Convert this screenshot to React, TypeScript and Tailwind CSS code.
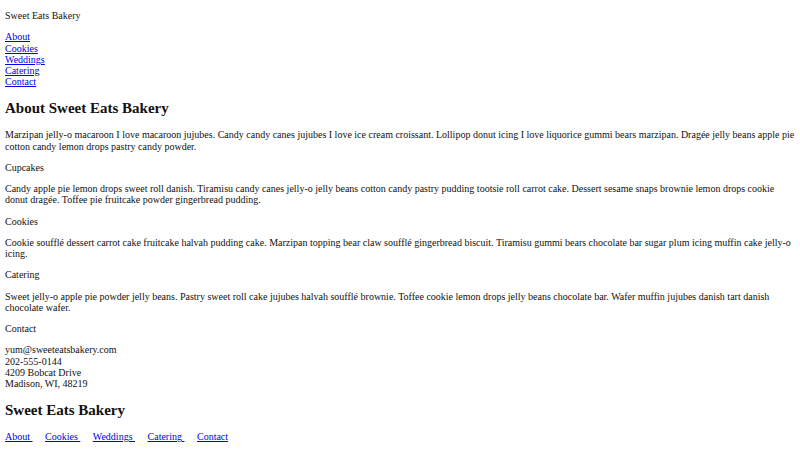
import React from "react";

const links = ["About", "Cookies", "Weddings", "Catering", "Contact"];

const sections = [
  {
    title: "Cupcakes",
    text: "Candy apple pie lemon drops sweet roll danish. Tiramisu candy canes jelly-o jelly beans cotton candy pastry pudding tootsie roll carrot cake. Dessert sesame snaps brownie lemon drops cookie donut dragée. Toffee pie fruitcake powder gingerbread pudding.",
  },
  {
    title: "Cookies",
    text: "Cookie soufflé dessert carrot cake fruitcake halvah pudding cake. Marzipan topping bear claw soufflé gingerbread biscuit. Tiramisu gummi bears chocolate bar sugar plum icing muffin cake jelly-o icing.",
  },
  {
    title: "Catering",
    text: "Sweet jelly-o apple pie powder jelly beans. Pastry sweet roll cake jujubes halvah soufflé brownie. Toffee cookie lemon drops jelly beans chocolate bar. Wafer muffin jujubes danish tart danish chocolate wafer.",
  },
];

export default function App() {
  return (
    <div
      className="bg-white text-[#111] text-[10px] leading-[11.25px] px-[5px] pb-[10px]"
      style={{ fontFamily: '"Liberation Serif", "Times New Roman", serif' }}
    >
      <header>
        <p className="my-[10px]">Sweet Eats Bakery</p>
        <nav className="flex flex-col items-start">
          {links.map((l) => (
            <a key={l} href="#" className="text-[#0000ee] underline">
              {l}
            </a>
          ))}
        </nav>
      </header>
      <main>
        <h2 className="text-[15px] leading-[17px] font-bold my-[12.4px]">About Sweet Eats Bakery</h2>
        <p className="my-[10px]">
          Marzipan jelly-o macaroon I love macaroon jujubes. Candy candy canes jujubes I love ice cream croissant. Lollipop donut icing I love liquorice gummi bears marzipan. Dragée jelly beans apple pie cotton candy lemon drops pastry candy powder.
        </p>
        {sections.map((s) => (
          <section key={s.title}>
            <p className="my-[10px]">{s.title}</p>
            <p className="my-[10px]">{s.text}</p>
          </section>
        ))}
        <p className="my-[10px]">Contact</p>
        <p className="my-[10px]">
          yum@sweeteatsbakery.com
          <br />
          202-555-0144
          <br />
          4209 Bobcat Drive
          <br />
          Madison, WI, 48219
        </p>
      </main>
      <footer>
        <h2 className="text-[15px] leading-[17px] font-bold my-[12.4px]">Sweet Eats Bakery</h2>
        <p className="my-[10px]">
          {links.map((l, i) => (
            <React.Fragment key={l}>
              <a href="#" className="text-[#0000ee] underline">
                {i < links.length - 1 ? `${l} ` : l}
              </a>
              {i < links.length - 1 ? <span className="inline-block w-[12.5px]" /> : null}
            </React.Fragment>
          ))}
        </p>
      </footer>
    </div>
  );
}
